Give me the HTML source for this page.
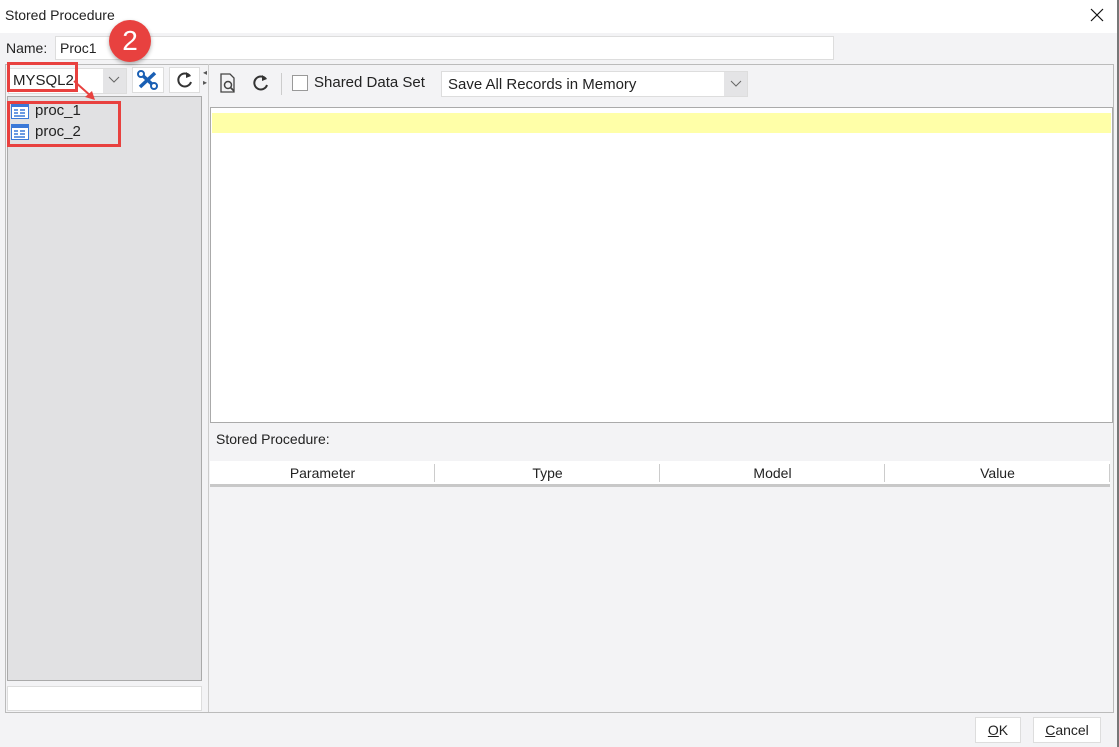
<!DOCTYPE html>
<html><head><meta charset="utf-8"><style>
*{box-sizing:border-box;margin:0;padding:0}
body{width:1119px;height:747px;background:#f3f3f5;font-family:"Liberation Sans",sans-serif;font-size:14px;color:#222;position:relative;overflow:hidden}
.a{position:absolute}
</style></head><body>
<div class="a" style="left:0;top:0;width:1119px;height:33px;background:#fff;border-right:1px solid #555"></div>
<div class="a" style="left:5px;top:7px;font-size:14px">Stored Procedure</div>
<svg class="a" style="left:1090px;top:8px" width="14" height="14"><path d="M1 1L13 13M13 1L1 13" stroke="#111" stroke-width="1.2"/></svg>
<div class="a" style="left:1117px;top:0;width:2px;height:747px;background:#777"></div>

<div class="a" style="left:6px;top:40px">Name:</div>
<div class="a" style="left:55px;top:36px;width:779px;height:24px;background:#fff;border:1px solid #ddd;padding:3px 4px">Proc1</div>

<div class="a" style="left:5px;top:64px;width:1109px;height:649px;border:1px solid #bbb"></div>

<div class="a" style="left:8px;top:68px;width:119px;height:26px;background:#fff;border:1px solid #ddd"></div>
<div class="a" style="left:103px;top:69px;width:23px;height:24px;background:#e4e4e6"></div>
<svg class="a" style="left:108px;top:76px" width="12" height="8"><path d="M1 1L6 6L11 1" stroke="#666" fill="none"/></svg>
<div class="a" style="left:13px;top:72px;font-size:15px">MYSQL2</div>
<div class="a" style="left:132px;top:67px;width:32px;height:26px;background:#fff;border:1px solid #ddd"></div>
<svg class="a" style="left:137px;top:70px" width="22" height="20"><path d="M3 3L18 17M18 3L3 17" stroke="#1a5fb4" stroke-width="3.5"/><circle cx="4" cy="4" r="3" fill="#fff" stroke="#1a5fb4" stroke-width="2"/><circle cx="17" cy="16" r="3" fill="#fff" stroke="#1a5fb4" stroke-width="2"/></svg>
<div class="a" style="left:169px;top:67px;width:31px;height:26px;background:#fff;border:1px solid #ddd"></div>
<svg class="a" style="left:176px;top:71px" width="18" height="18"><path d="M14 5A6.5 6.5 0 1 0 15 11" stroke="#333" stroke-width="2" fill="none"/><path d="M10 1L15 5L10 7Z" fill="#333"/></svg>
<div class="a" style="left:203px;top:68px;font-size:8px;color:#555;line-height:10px">◂<br>▸</div>

<div class="a" style="left:7px;top:96px;width:195px;height:585px;background:#e1e1e3;border:1px solid #aaa"></div>
<div class="a" style="left:7px;top:686px;width:195px;height:25px;background:#fff;border:1px solid #ddd"></div>
<div class="a" style="left:208px;top:64px;width:1px;height:648px;background:#ccc"></div>

<svg class="a" style="left:11px;top:103px" width="18" height="16"><rect x="0.5" y="0.5" width="17" height="15" fill="#fff" stroke="#3a78d8"/><rect x="1" y="1" width="16" height="3" fill="#3a78d8"/><path d="M3 7h4M9 7h5M3 10h4M9 10h5M3 13h11" stroke="#3a78d8" stroke-width="1.5"/></svg>
<div class="a" style="left:35px;top:102px;font-size:15px">proc_1</div>
<svg class="a" style="left:11px;top:124px" width="18" height="16"><rect x="0.5" y="0.5" width="17" height="15" fill="#fff" stroke="#3a78d8"/><rect x="1" y="1" width="16" height="3" fill="#3a78d8"/><path d="M3 7h4M9 7h5M3 10h4M9 10h5M3 13h11" stroke="#3a78d8" stroke-width="1.5"/></svg>
<div class="a" style="left:35px;top:123px;font-size:15px">proc_2</div>

<svg class="a" style="left:219px;top:73px" width="18" height="20"><path d="M2 1h9l4 4v14H2Z" fill="none" stroke="#444" stroke-width="1.3"/><circle cx="9" cy="12" r="3.5" fill="none" stroke="#444" stroke-width="1.5"/><path d="M11.5 14.5L15 18" stroke="#444" stroke-width="1.8"/></svg>
<svg class="a" style="left:252px;top:74px" width="18" height="18"><path d="M14 5A6.5 6.5 0 1 0 15 11" stroke="#333" stroke-width="2" fill="none"/><path d="M10 1L15 5L10 7Z" fill="#333"/></svg>
<div class="a" style="left:281px;top:73px;width:1px;height:22px;background:#ccc"></div>
<div class="a" style="left:292px;top:75px;width:16px;height:16px;border:1px solid #999;background:#fff"></div>
<div class="a" style="left:314px;top:74px;font-size:15px">Shared Data Set</div>
<div class="a" style="left:441px;top:71px;width:307px;height:26px;background:#fff;border:1px solid #ddd;padding:4px 6px;font-size:15px">Save All Records in Memory</div>
<div class="a" style="left:724px;top:72px;width:23px;height:24px;background:#e4e4e6"></div>
<svg class="a" style="left:730px;top:80px" width="12" height="8"><path d="M1 1L6 6L11 1" stroke="#666" fill="none"/></svg>

<div class="a" style="left:210px;top:107px;width:903px;height:316px;background:#fff;border:1px solid #aaa"></div>
<div class="a" style="left:212px;top:113px;width:899px;height:20px;background:#ffffa8"></div>

<div class="a" style="left:216px;top:431px">Stored Procedure:</div>
<div class="a" style="left:210px;top:461px;width:900px;height:26px;background:#fff;border-bottom:3px solid #c8c8c8"></div>
<div class="a" style="left:210px;top:465px;width:225px;text-align:center">Parameter</div>
<div class="a" style="left:435px;top:465px;width:225px;text-align:center">Type</div>
<div class="a" style="left:660px;top:465px;width:225px;text-align:center">Model</div>
<div class="a" style="left:885px;top:465px;width:225px;text-align:center">Value</div>
<div class="a" style="left:434px;top:464px;width:1px;height:18px;background:#ccc"></div>
<div class="a" style="left:659px;top:464px;width:1px;height:18px;background:#ccc"></div>
<div class="a" style="left:884px;top:464px;width:1px;height:18px;background:#ccc"></div>
<div class="a" style="left:1109px;top:464px;width:1px;height:18px;background:#ccc"></div>

<div class="a" style="left:975px;top:717px;width:46px;height:26px;background:#fff;border:1px solid #ddd;text-align:center;padding-top:4px"><u>O</u>K</div>
<div class="a" style="left:1033px;top:717px;width:68px;height:26px;background:#fff;border:1px solid #ddd;text-align:center;padding-top:4px"><u>C</u>ancel</div>

<div class="a" style="left:7px;top:62px;width:71px;height:30px;border:3px solid #e8413f"></div>
<div class="a" style="left:7px;top:101px;width:114px;height:46px;border:3px solid #e8413f"></div>
<svg class="a" style="left:70px;top:78px" width="30" height="26"><path d="M4 3L22 19" stroke="#e8413f" stroke-width="2"/><path d="M25 22L15 19L22 13Z" fill="#e8413f"/></svg>
<div class="a" style="left:109px;top:20px;width:42px;height:42px;border-radius:50%;background:#e8413f;color:#fff;font-size:28px;text-align:center;line-height:42px;box-shadow:0 2px 4px rgba(0,0,0,.3)">2</div>
</body></html>
